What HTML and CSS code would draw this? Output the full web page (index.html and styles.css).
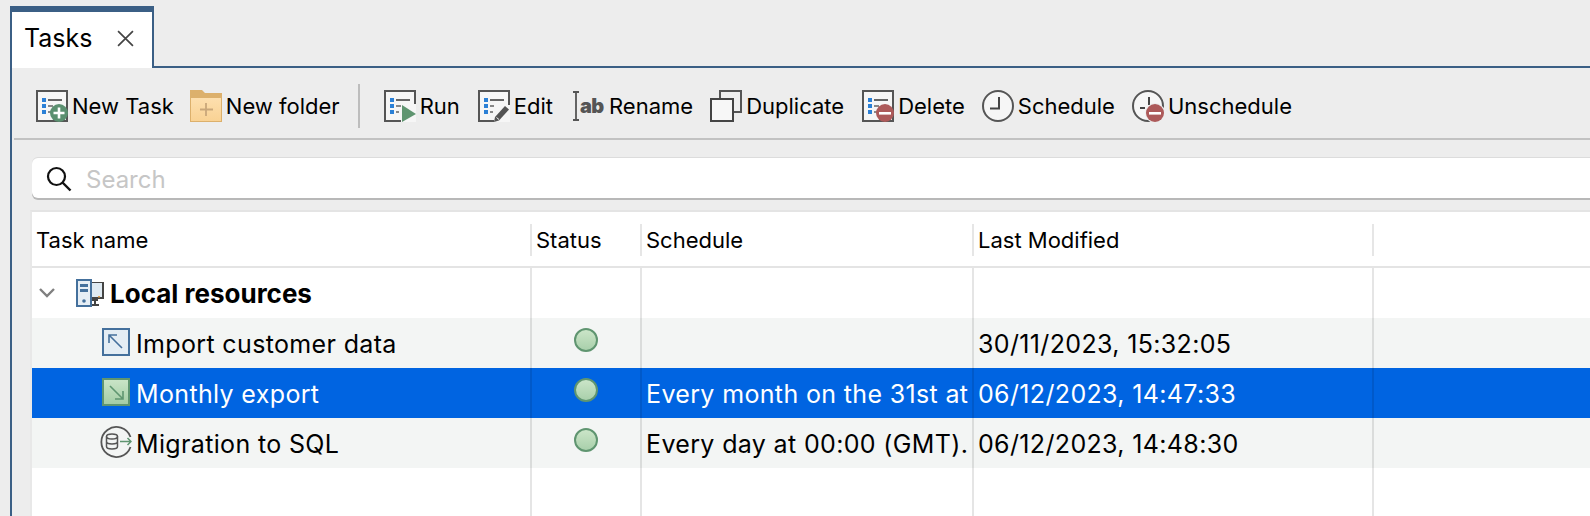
FILE: index.html
```html
<!DOCTYPE html>
<html lang="en">
<head>
<meta charset="utf-8">
<title>Tasks</title>
<link rel="stylesheet" href="styles.css">
</head>
<body>
<svg class="defs" width="0" height="0" aria-hidden="true">
  <defs>
    <g id="list">
      <rect x="1" y="1" width="30" height="30" fill="#f6f6f6" stroke="#555" stroke-width="2"/>
      <rect x="6" y="8" width="4" height="4" fill="#2b80d6"/>
      <rect x="6" y="14" width="4" height="4" fill="#2b80d6"/>
      <rect x="6" y="20" width="4" height="4" fill="#2b80d6"/>
      <rect x="12" y="9" width="14" height="2" fill="#666"/>
      <rect x="12" y="15" width="5" height="2" fill="#888"/>
      <rect x="12" y="21" width="3" height="2" fill="#888"/>
    </g>
    <g id="clock">
      <circle cx="16" cy="16" r="15" fill="#f6f6f6" stroke="#555" stroke-width="2"/>
    </g>
    <g id="minus">
      <circle cx="23" cy="23" r="9" fill="#ad5a5a"/>
      <rect x="17" y="22" width="12" height="2.6" fill="#fff"/>
    </g>
    <linearGradient id="greenfill" x1="0" y1="0" x2="0" y2="1">
      <stop offset="0" stop-color="#cbe5c8"/>
      <stop offset="1" stop-color="#a2cca4"/>
    </linearGradient>
    <linearGradient id="folderfill" x1="0" y1="0" x2="0" y2="1">
      <stop offset="0" stop-color="#fddfae"/>
      <stop offset="1" stop-color="#f9d294"/>
    </linearGradient>
  </defs>
</svg>

<div class="app">
  <div class="tabbar">
    <div class="tab">
      <span class="tab-title">Tasks</span>
      <svg class="tab-close" viewBox="0 0 16 16"><path d="M1 1l14 14M15 1L1 15" stroke="#444" stroke-width="1.600" fill="none"/></svg>
    </div>
    <div class="tab-rest"></div>
  </div>

  <div class="content">
    <div class="toolbar">
      <div class="tool">
        <svg class="icon" viewBox="0 0 32 32"><use href="#list"/><circle cx="23" cy="23" r="9" fill="#5b9070"/><path d="M23 17.500v11M17.500 23h11" stroke="#fff" stroke-width="2.600"/></svg>
        <span>New Task</span>
      </div>
      <div class="tool tool-folder">
        <svg class="icon" viewBox="0 0 32 32"><path d="M0 0h12l3 3h17v29H0z" fill="#dcb06c"/><rect x="1" y="8" width="30" height="23" fill="url(#folderfill)"/><path d="M16 13v13M10 19.500h13" stroke="#c9a77a" stroke-width="1.800"/></svg>
        <span>New folder</span>
      </div>
      <div class="tool-sep"></div>
      <div class="tool">
        <svg class="icon" viewBox="0 0 32 32"><use href="#list"/><rect x="17" y="14" width="15" height="18" fill="#f6f6f6"/><path d="M18 15l14 9-14 8z" fill="#5f9570"/></svg>
        <span>Run</span>
      </div>
      <div class="tool tool-edit">
        <svg class="icon" viewBox="0 0 32 32"><use href="#list"/><rect x="16" y="15" width="16" height="17" fill="#f6f6f6"/><path d="M17 27l10-11 4 3.500-10 11-5 1.500z" fill="#555"/><path d="M18.500 27.500l2.500 2" stroke="#f6f6f6" stroke-width="1"/></svg>
        <span>Edit</span>
      </div>
      <div class="tool tool-rename">
        <span class="rename-icon">
          <svg class="ibeam" viewBox="0 0 6 30"><path d="M0 1h6M0 29h6M3 1v28" stroke="#555" stroke-width="1.800" fill="none"/></svg>
          <span class="ab">ab</span>
        </span>
        <span>Rename</span>
      </div>
      <div class="tool">
        <svg class="icon" viewBox="0 0 32 32"><rect x="10" y="1" width="21" height="21" fill="#f0f0f0" stroke="#555" stroke-width="2"/><rect x="1" y="9" width="22" height="22" fill="#f7f7f7" stroke="#444" stroke-width="2"/></svg>
        <span>Duplicate</span>
      </div>
      <div class="tool tool-delete">
        <svg class="icon" viewBox="0 0 32 32"><use href="#list"/><use href="#minus"/></svg>
        <span>Delete</span>
      </div>
      <div class="tool">
        <svg class="icon" viewBox="0 0 32 32"><use href="#clock"/><path d="M17 7v11.500H8" stroke="#444" stroke-width="2" fill="none"/></svg>
        <span>Schedule</span>
      </div>
      <div class="tool">
        <svg class="icon" viewBox="0 0 32 32"><use href="#clock"/><path d="M17 7v8M8 18h5" stroke="#444" stroke-width="2" fill="none"/><circle cx="23" cy="23" r="10" fill="#ededed"/><use href="#minus"/></svg>
        <span>Unschedule</span>
      </div>
    </div>

    <div class="search">
      <svg class="search-icon" viewBox="0 0 26 26"><circle cx="10.500" cy="10.500" r="8.500" fill="none" stroke="#111" stroke-width="2.200"/><path d="M16.500 16.500l8 8" stroke="#111" stroke-width="2.400"/></svg>
      <span class="search-text">Search</span>
    </div>

    <div class="table">
      <div class="head">
        <div class="hcell">Task name</div>
        <div class="hcell">Status</div>
        <div class="hcell">Schedule</div>
        <div class="hcell">Last Modified</div>
        <div class="hcell last"></div>
      </div>

      <div class="row">
        <div class="cell group">
          <svg class="chevron" viewBox="0 0 16 10"><path d="M1 1l7 7 7-7" fill="none" stroke="#808080" stroke-width="2.400"/></svg>
          <svg class="res-icon" viewBox="0 0 28 28"><rect x="1" y="1" width="14" height="26" fill="#e6eef5" stroke="#44709c" stroke-width="2"/><rect x="4" y="5" width="8" height="3" fill="#44709c"/><rect x="4" y="10" width="8" height="3" fill="#44709c"/><circle cx="8" cy="22" r="1.800" fill="#44709c"/><path d="M16 3h12v17H16z" fill="#444"/><rect x="16" y="4" width="10" height="14" fill="#dfeaf2"/><rect x="16" y="20" width="6" height="2" fill="#444"/><rect x="16" y="25" width="7" height="2" fill="#444"/><rect x="18" y="21" width="2" height="5" fill="#444"/><rect x="22" y="17" width="2" height="1.500" fill="#e0a050"/></svg>
          <span>Local resources</span>
        </div>
        <div class="cell"></div>
        <div class="cell"></div>
        <div class="cell"></div>
        <div class="cell last"></div>
      </div>

      <div class="row alt">
        <div class="cell name">
          <svg class="task-icon" viewBox="0 0 28 28"><rect x="1" y="1" width="26" height="26" fill="#e4edf4" stroke="#44709c" stroke-width="2"/><path d="M7 15V7h8M7 7l13 13" fill="none" stroke="#44709c" stroke-width="1.600"/></svg>
          <span class="label">Import customer data</span>
        </div>
        <div class="cell status"><span class="dot"></span></div>
        <div class="cell"></div>
        <div class="cell date">30/11/2023, 15:32:05</div>
        <div class="cell last"></div>
      </div>

      <div class="row selected">
        <div class="cell name">
          <svg class="task-icon" viewBox="0 0 28 28"><rect x="1" y="1" width="26" height="26" fill="url(#greenfill)" stroke="#5f9570" stroke-width="2"/><path d="M21 13v8h-8M21 21L8 8" fill="none" stroke="#5f9570" stroke-width="1.600"/></svg>
          <span class="label">Monthly export</span>
        </div>
        <div class="cell status"><span class="dot"></span></div>
        <div class="cell sched">Every month on the 31st at</div>
        <div class="cell date">06/12/2023, 14:47:33</div>
        <div class="cell last"></div>
      </div>

      <div class="row alt">
        <div class="cell name">
          <svg class="mig-icon" viewBox="0 0 32 32"><path d="M30.500 11A15 15 0 1 0 30.500 21" fill="none" stroke="#555" stroke-width="1.800"/><ellipse cx="12" cy="10.500" rx="5.500" ry="2.500" fill="none" stroke="#555" stroke-width="1.500"/><path d="M6.500 10.500v10c0 3.300 11 3.300 11 0v-10M6.500 15.500c0 3.300 11 3.300 11 0" fill="none" stroke="#555" stroke-width="1.500"/><path d="M20 15.500h11M27.500 12l3.500 3.500-3.500 3.500" fill="none" stroke="#5f9570" stroke-width="1.500"/></svg>
          <span class="label">Migration to SQL</span>
        </div>
        <div class="cell status"><span class="dot"></span></div>
        <div class="cell sched">Every day at 00:00 (GMT).</div>
        <div class="cell date">06/12/2023, 14:48:30</div>
        <div class="cell last"></div>
      </div>

      <div class="row filler">
        <div class="cell"></div>
        <div class="cell"></div>
        <div class="cell"></div>
        <div class="cell"></div>
        <div class="cell last"></div>
      </div>
    </div>
  </div>
</div>
</body>
</html>
```

FILE: styles.css
```css
html, body {
  margin: 0;
  height: 100%;
  overflow: hidden;
  background: #ededed;
  color: #000;
  font-family: Inter, "Liberation Sans", sans-serif;
}

.defs {
  display: block;
  height: 0;
}

.app {
  box-sizing: border-box;
  height: 100%;
  padding: 6px 0 0 10px;
  display: flex;
  flex-direction: column;
}

.tabbar {
  display: flex;
  height: 62px;
  flex: none;
}

.tab {
  box-sizing: border-box;
  width: 144px;
  background: #fff;
  border: solid #3b5f85;
  border-width: 6px 2px 0 2px;
  display: flex;
  align-items: center;
  padding: 0 0 4px 12px;
}

.tab-title {
  font-size: 25px;
  width: 93px;
}

.tab-close {
  width: 17px;
  height: 17px;
}

.tab-rest {
  flex: 1;
  border-bottom: 2px solid #3b5f85;
}

.content {
  flex: 1;
  min-height: 0;
  display: flex;
  flex-direction: column;
  border-left: 2px solid #3b5f85;
}

.toolbar {
  margin: 0 0 0 2px;
  height: 72px;
  flex: none;
  box-sizing: border-box;
  border-bottom: 2px solid #c2c2c2;
  display: flex;
  align-items: center;
  padding: 6px 0 0 22px;
  gap: 17px;
  font-size: 22px;
}

.tool {
  display: flex;
  align-items: center;
  gap: 4px;
}

.tool-folder {
  margin-left: -1px;
}

.tool-edit {
  margin-left: 1px;
}

.tool-rename {
  margin-left: 3px;
}

.tool-delete {
  margin-left: 1px;
}

.icon {
  width: 32px;
  height: 32px;
  flex: none;
}

.tool-sep {
  width: 2px;
  height: 44px;
  background: #bdbdbd;
  margin: 0 7px 0 1px;
}

.rename-icon {
  width: 32px;
  height: 32px;
  display: flex;
  align-items: center;
  gap: 1px;
}

.ibeam {
  width: 6px;
  height: 30px;
}

.ab {
  font-family: Inter, sans-serif;
  font-weight: 900;
  font-size: 20px;
  letter-spacing: -0.6px;
  color: #555;
}

.search {
  margin: 18px 0 0 20px;
  height: 40px;
  flex: none;
  background: #fff;
  border-radius: 6px 0 0 6px;
  box-shadow: 0 -1px 0 #dcdcdc, 0 2px 0 #b8b8b8;
  display: flex;
  align-items: center;
  padding-left: 14px;
}

.search-icon {
  width: 26px;
  height: 26px;
  margin-top: 1px;
}

.search-text {
  margin: 2px 0 0 14px;
  font-size: 24px;
  color: #c6c6c6;
}

.table {
  margin: 12px 0 0 18px;
  flex: 1;
  min-height: 0;
  background: #fff;
  border-top: 2px solid #e4e4e4;
  border-left: 2px solid #e8e8e8;
  display: flex;
  flex-direction: column;
}

.head,
.row {
  display: grid;
  grid-template-columns: 500px 110px 332px 400px 1fr;
}

.head {
  box-sizing: border-box;
  height: 56px;
  flex: none;
  padding-top: 12px;
  align-items: start;
  border-bottom: 2px solid #e4e4e4;
  font-size: 22px;
}

.hcell {
  box-sizing: border-box;
  height: 32px;
  padding-left: 4px;
  line-height: 32px;
  border-right: 2px solid #e6e6e6;
}

.row {
  height: 50px;
  flex: none;
  font-size: 25px;
  letter-spacing: 0.35px;
}

.row.alt {
  background: #f3f5f4;
}

.row.selected {
  background: #0064e1;
  color: #fff;
}

.row.filler {
  flex: 1;
  height: auto;
}

.cell {
  box-sizing: border-box;
  display: flex;
  align-items: center;
  white-space: nowrap;
  overflow: hidden;
  border-right: 2px solid rgba(0, 0, 0, 0.1);
}

.hcell.last,
.cell.last {
  border-right: 0;
}

.group {
  padding-left: 7px;
  font-size: 26px;
  font-weight: 700;
  letter-spacing: 0;
}

.chevron {
  width: 16px;
  height: 10px;
  flex: none;
}

.res-icon {
  width: 28px;
  height: 28px;
  flex: none;
  margin: 0 6px 0 21px;
}

.name {
  padding-left: 70px;
}

.label {
  margin-top: 2px;
}

.task-icon {
  width: 28px;
  height: 28px;
  flex: none;
  margin: 0 6px 2px 0;
}

.mig-icon {
  width: 32px;
  height: 32px;
  flex: none;
  margin: 0 4px 2px -2px;
}

.status {
  justify-content: center;
}

.dot {
  box-sizing: border-box;
  width: 24px;
  height: 24px;
  border-radius: 50%;
  margin-bottom: 6px;
  background: linear-gradient(#cbe5c8, #a9d0ab);
  border: 2px solid #5f9570;
}

.sched {
  padding: 2px 0 0 4px;
}

.date {
  padding: 2px 0 0 4px;
}
```
